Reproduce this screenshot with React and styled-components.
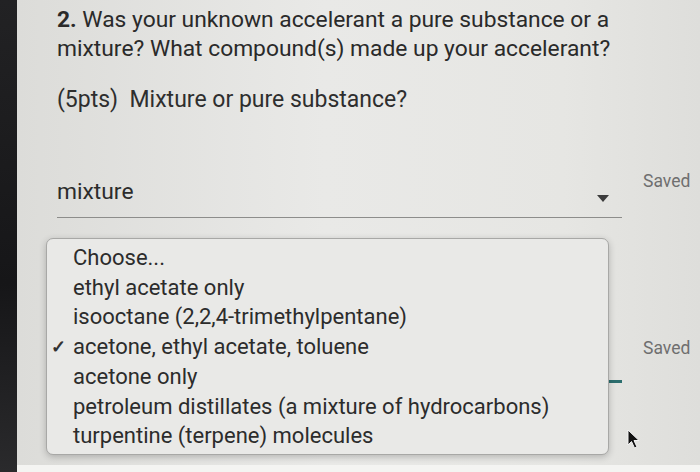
import React from "react";
import styled, { createGlobalStyle } from "styled-components";

const GlobalStyle = createGlobalStyle`
  body {
    margin: 0;
    background: #e4e4e1;
    font-family: Roboto, "Liberation Sans", sans-serif;
    color: #2e2e2e;
  }
`;

const Page = styled.div`
  display: flex;
  width: 700px;
  height: 472px;
  overflow: hidden;
`;

const Bezel = styled.div`
  width: 17px;
  flex-shrink: 0;
  background: linear-gradient(to bottom, #222224, #161618 60%, #2a2a2c);
`;

const Screen = styled.div`
  flex: 1;
  position: relative;
  padding: 5px 0 0 40px;
  background: linear-gradient(to right, #dcdcd9, #e9e9e7 45%, #e6e6e3 80%, #dededb);
  border-bottom: 7px solid #f4f4f2;
`;

const Question = styled.h2`
  margin: 0;
  width: 580px;
  font-size: 22.8px;
  line-height: 29px;
  font-weight: 400;
  color: #2a2a2a;

  b {
    font-weight: 700;
  }
`;

const Prompt = styled.p`
  margin: 22px 0 0;
  font-size: 23px;
  line-height: 30px;
  color: #2e2e2e;
`;

const FieldRow = styled.div`
  display: flex;
  align-items: flex-start;
  margin-top: ${(p) => p.$gap}px;
`;

const Field = styled.div`
  width: 565px;
  height: ${(p) => p.$height}px;
  display: flex;
  align-items: center;
  justify-content: space-between;
  box-sizing: border-box;
  border-bottom: ${(p) => (p.$active ? "3px solid #2c6e6e" : "1.5px solid #8d8d8b")};
`;

const Value = styled.span`
  font-size: 22.8px;
  color: #2c2c2c;
`;

const Arrow = styled.span`
  width: 0;
  height: 0;
  margin-right: 13px;
  margin-top: 14px;
  border-left: 6px solid transparent;
  border-right: 6px solid transparent;
  border-top: 7px solid #3c3c3c;
`;

const Saved = styled.span`
  margin-left: 21px;
  margin-top: ${(p) => p.$offset}px;
  font-size: 17.5px;
  color: #6f6f6f;
`;

const Menu = styled.ul`
  position: absolute;
  left: 29px;
  top: 238px;
  width: 563px;
  height: 217px;
  margin: 0;
  padding: 4px 0 0;
  list-style: none;
  box-sizing: border-box;
  background: #e9e9e7;
  border: 1px solid #a8a8a6;
  border-radius: 7px;
  box-shadow: 0 2px 7px rgba(0, 0, 0, 0.22);
`;

const Item = styled.li`
  position: relative;
  padding-left: 26px;
  font-size: 22px;
  line-height: 29.7px;
  color: #2c2c2c;
  white-space: nowrap;
`;

const Check = styled.span`
  position: absolute;
  left: 4px;
  top: 0;
  font-size: 18px;
  font-weight: 700;
  color: #333;
`;

const Cursor = styled.svg`
  position: absolute;
  left: 610px;
  top: 429px;
`;

const options = [
  "Choose...",
  "ethyl acetate only",
  "isooctane (2,2,4-trimethylpentane)",
  "acetone, ethyl acetate, toluene",
  "acetone only",
  "petroleum distillates (a mixture of hydrocarbons)",
  "turpentine (terpene) molecules",
];

const App = () => {
  return (
    <>
      <GlobalStyle />
      <Page>
        <Bezel />
        <Screen>
          <Question>
            <b>2.</b> Was your unknown accelerant a pure substance or a mixture? What
            compound(s) made up your accelerant?
          </Question>
          <Prompt>(5pts)&nbsp; Mixture or pure substance?</Prompt>

          <FieldRow $gap={50}>
            <Field $height={53}>
              <Value>mixture</Value>
              <Arrow />
            </Field>
            <Saved $offset={6}>Saved</Saved>
          </FieldRow>

          <FieldRow $gap={120}>
            <Field $height={45} $active />
            <Saved $offset={0}>Saved</Saved>
          </FieldRow>

          <Menu>
            {options.map((o, i) => (
              <Item key={o}>
                {i === 3 && <Check>✓</Check>}
                {o}
              </Item>
            ))}
          </Menu>

          <Cursor width="14" height="20" viewBox="0 0 14 20">
            <path
              d="M1 1 L1 16 L4.5 12.5 L7.5 19 L10 18 L7 11.5 L12 11.5 Z"
              fill="#111"
              stroke="#f2f2f2"
              strokeWidth="1"
            />
          </Cursor>
        </Screen>
      </Page>
    </>
  );
};

export default App;
